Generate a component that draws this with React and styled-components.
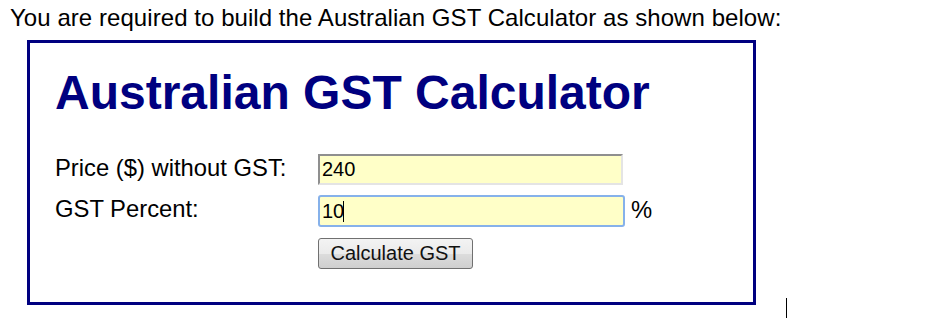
import React from "react";
import styled, { createGlobalStyle } from "styled-components";

const Global = createGlobalStyle`
  html, body { margin: 0; padding: 0; background: #ffffff; }
  body { font-family: "Liberation Sans", Arial, sans-serif; color: #000; }
`;

const Page = styled.div`
  position: relative;
  width: 938px;
  height: 335px;
  overflow: hidden;
`;

const Intro = styled.p`
  margin: 0;
  height: 28px;
  padding: 4px 0 0 10px;
  font-size: 24px;
  letter-spacing: 0.06px;
  line-height: 28px;
  white-space: nowrap;
`;

const Card = styled.section`
  box-sizing: border-box;
  margin: 8px 0 0 27px;
  width: 729px;
  height: 265px;
  border: 3px solid #000080;
  padding: 22px 0 0 25px;
`;

const Title = styled.h1`
  margin: 0;
  font-size: 48px;
  line-height: 56px;
  font-weight: 700;
  color: #000080;
  white-space: nowrap;
`;

const Form = styled.div`
  margin-top: 33px;
  display: grid;
  grid-template-columns: 263px auto 1fr;
  grid-auto-rows: 31px;
  row-gap: 10px;
  align-items: start;
`;

const Label = styled.label`
  font-size: 23.8px;
  line-height: 27px;
  white-space: nowrap;
`;

const FieldWrap = styled.div`
  position: relative;
  height: ${(p) => (p.$focused ? "32px" : "31px")};
`;

const Input = styled.input`
  box-sizing: border-box;
  display: block;
  width: ${(p) => (p.$focused ? "307px" : "305px")};
  height: ${(p) => (p.$focused ? "32px" : "31px")};
  margin: 0;
  padding: 0 2px;
  font-family: "Liberation Sans", Arial, sans-serif;
  font-size: 20px;
  color: #000;
  background: #ffffc8;
  outline: none;
  border-style: solid;
  ${(p) =>
    p.$focused
      ? `
    border: 2px solid #86b1ea;
    border-radius: 3px;
  `
      : `
    border-width: 2px 2px 2px 2px;
    border-color: #8f8f8f #e4e4e4 #e4e4e4 #8f8f8f;
    border-radius: 0;
  `}
`;

const Caret = styled.span`
  position: absolute;
  left: 25px;
  top: 6px;
  width: 1px;
  height: 21px;
  background: #000;
`;

const Unit = styled.span`
  margin-left: 6px;
  font-size: 23.8px;
  line-height: 29px;
`;

const Spacer = styled.span``;

const Button = styled.button`
  margin-top: 2px;
  box-sizing: border-box;
  width: 155px;
  height: 31px;
  padding: 0;
  font-family: "Liberation Sans", Arial, sans-serif;
  font-size: 20px;
  color: #111;
  border: 1px solid #707070;
  border-radius: 3px;
  background: linear-gradient(#f3f3f3 0%, #ebebeb 50%, #dddddd 50%, #cfcfcf 100%);
`;

const DocCaret = styled.span`
  position: absolute;
  left: 786px;
  top: 298px;
  width: 1px;
  height: 20px;
  background: #000;
`;

export default function App() {
  return (
    <Page>
      <Global />
      <Intro>You are required to build the Australian GST Calculator as shown below:</Intro>
      <Card>
        <Title>Australian GST Calculator</Title>
        <Form>
          <Label htmlFor="price">Price ($) without GST:</Label>
          <FieldWrap>
            <Input id="price" readOnly value="240" />
          </FieldWrap>
          <Spacer />
          <Label htmlFor="pct">GST Percent:</Label>
          <FieldWrap $focused>
            <Input id="pct" $focused readOnly value="10" />
            <Caret />
          </FieldWrap>
          <Unit>%</Unit>
          <Spacer />
          <Button type="button">Calculate GST</Button>
          <Spacer />
        </Form>
      </Card>
      <DocCaret />
    </Page>
  );
}
